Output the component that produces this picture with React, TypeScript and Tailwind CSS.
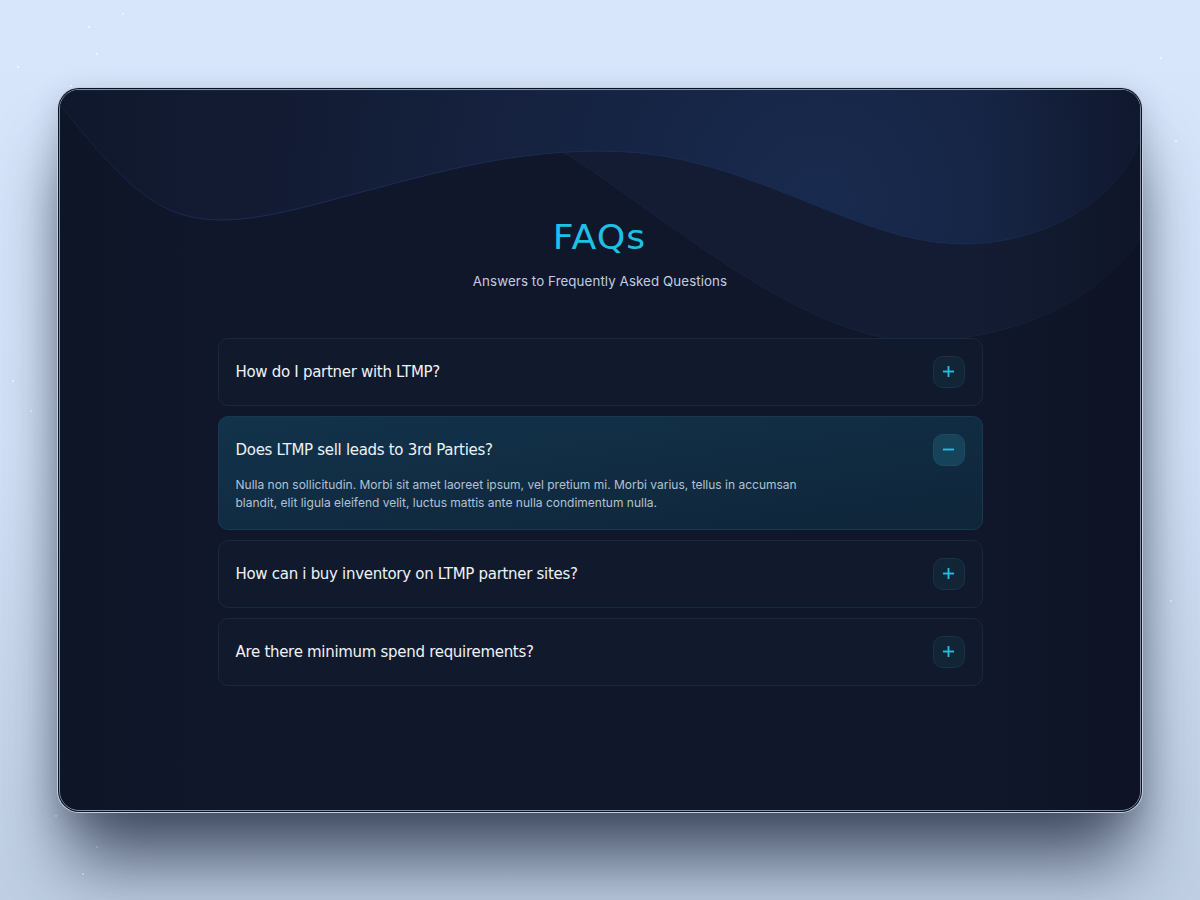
import React, { useState } from "react"

type Faq = { q: string; a: string }

const faqs: Faq[] = [
  { q: "How do I partner with LTMP?", a: "Nulla non sollicitudin. Morbi sit amet laoreet ipsum, vel pretium mi. Morbi varius, tellus in accumsan blandit, elit ligula eleifend velit, luctus mattis ante nulla condimentum nulla." },
  { q: "Does LTMP sell leads to 3rd Parties?", a: "Nulla non sollicitudin. Morbi sit amet laoreet ipsum, vel pretium mi. Morbi varius, tellus in accumsan blandit, elit ligula eleifend velit, luctus mattis ante nulla condimentum nulla." },
  { q: "How can i buy inventory on LTMP partner sites?", a: "Nulla non sollicitudin. Morbi sit amet laoreet ipsum, vel pretium mi. Morbi varius, tellus in accumsan blandit, elit ligula eleifend velit, luctus mattis ante nulla condimentum nulla." },
  { q: "Are there minimum spend requirements?", a: "Nulla non sollicitudin. Morbi sit amet laoreet ipsum, vel pretium mi. Morbi varius, tellus in accumsan blandit, elit ligula eleifend velit, luctus mattis ante nulla condimentum nulla." },
]

// little specks scattered over the backdrop
const specks = [
  [122, 13], [88, 26], [96, 53], [17, 66], [70, 85], [1160, 57], [1175, 140],
  [30, 410], [12, 380], [55, 815], [96, 846], [82, 873], [1170, 600],
]

const Waves = () => (
  <svg className="absolute inset-0 h-full w-full" viewBox="0 0 1082 722" preserveAspectRatio="none">
    <defs>
      <radialGradient id="glow" cx="760" cy="110" r="560" gradientUnits="userSpaceOnUse">
        <stop offset="0" stopColor="#182a4e" />
        <stop offset="0.6" stopColor="#15213e" />
        <stop offset="1" stopColor="#121b32" />
      </radialGradient>
      <linearGradient id="fade" x1="0" y1="0" x2="1" y2="0">
        <stop offset="0" stopColor="#0d1324" stopOpacity="0.45" />
        <stop offset="0.15" stopColor="#0d1324" stopOpacity="0" />
        <stop offset="0.85" stopColor="#0d1324" stopOpacity="0" />
        <stop offset="1" stopColor="#0b1020" stopOpacity="0.55" />
      </linearGradient>
    </defs>
    <path
      d="M250,0 C380,20 460,35 520,72 C620,140 740,240 840,250 C950,258 1040,210 1082,150 V0 Z"
      fill="#131c32"
      stroke="#17223b"
      strokeWidth="1"
    />
    <path
      d="M0,0 H1082 V50 C1060,110 985,158 894,154 C800,150 700,75 581,63 C470,54 380,82 281,108 C200,130 150,140 105,118 C65,98 25,45 0,15 Z"
      fill="url(#glow)"
      stroke="#1b2d55"
      strokeWidth="1"
    />
    <rect x="0" y="0" width="1082" height="722" fill="url(#fade)" />
  </svg>
)

const PlusMinus = ({ open }: { open: boolean }) => (
  <svg width="13" height="13" viewBox="0 0 14 14" fill="none" stroke="#22bde3" strokeWidth="2">
    <path d="M1 7h12" />
    {!open && <path d="M7 1v12" />}
  </svg>
)

const FaqItem = ({ item, open, onToggle }: { item: Faq; open: boolean; onToggle: () => void }) => (
  <div
    className={
      open
        ? "rounded-[10px] border border-[#1a3950] bg-gradient-to-br from-[#12334b] to-[#0f2539] px-[17px] pt-[17px] pb-[17px]"
        : "rounded-[10px] border border-[#18293a] bg-[#111a2c] px-[17px] pt-[17px] pb-[17px]"
    }
  >
    <div className="flex items-center justify-between">
      <h3 className="text-[15px] tracking-[-0.3px] text-[#eef2f8]" style={{ fontFamily: '"DejaVu Sans", sans-serif' }}>
        {item.q}
      </h3>
      <button
        onClick={onToggle}
        className={
          open
            ? "flex h-8 w-8 items-center justify-center rounded-[10px] border border-[#1f4a62] bg-[#17435a]"
            : "flex h-8 w-8 items-center justify-center rounded-[10px] border border-[#1a3246] bg-[#122537]"
        }
      >
        <PlusMinus open={open} />
      </button>
    </div>
    {open && (
      <p className="mt-[10px] max-w-[580px] text-[12px] leading-[18px] text-[#b4c1d4]">{item.a}</p>
    )}
  </div>
)

export default function App() {
  const [openIdx, setOpenIdx] = useState<number>(1)

  return (
    <div
      className="relative h-[900px] w-full overflow-hidden bg-gradient-to-b from-[#d7e6fb] via-[#d3e2f7] to-[#c0cfe4] pt-[89px]"
      style={{ fontFamily: "Inter, sans-serif" }}
    >
      {specks.map(([x, y], i) => (
        <span
          key={i}
          className="absolute h-[2px] w-[2px] rounded-full bg-white opacity-80"
          style={{ left: x, top: y }}
        />
      ))}

      <div className="relative mx-auto h-[722px] w-[1082px] overflow-hidden rounded-[20px] border border-[#7f8ca6] bg-[#10172a] shadow-[0_0_0_1px_#0c1120,0_0_0_2px_#c3cee1,0_60px_70px_-10px_rgba(30,40,62,0.75),0_10px_30px_rgba(35,48,75,0.25)]">
        <Waves />

        <div className="relative flex flex-col items-center pt-[128px]">
          <h1
            className="scale-x-110 text-[33px] leading-[40px] tracking-[1px] text-[#1fc0e6]"
            style={{ fontFamily: '"DejaVu Sans", sans-serif' }}
          >
            FAQs
          </h1>
          <p className="mt-[14px] text-[13.3px] tracking-[0.1px] text-[#c3cde0]">Answers to Frequently Asked Questions</p>

          <div className="mt-[46px] flex w-[765px] flex-col gap-[10px]">
            {faqs.map((f, i) => (
              <FaqItem
                key={f.q}
                item={f}
                open={openIdx === i}
                onToggle={() => setOpenIdx(openIdx === i ? -1 : i)}
              />
            ))}
          </div>
        </div>
      </div>
    </div>
  )
}
